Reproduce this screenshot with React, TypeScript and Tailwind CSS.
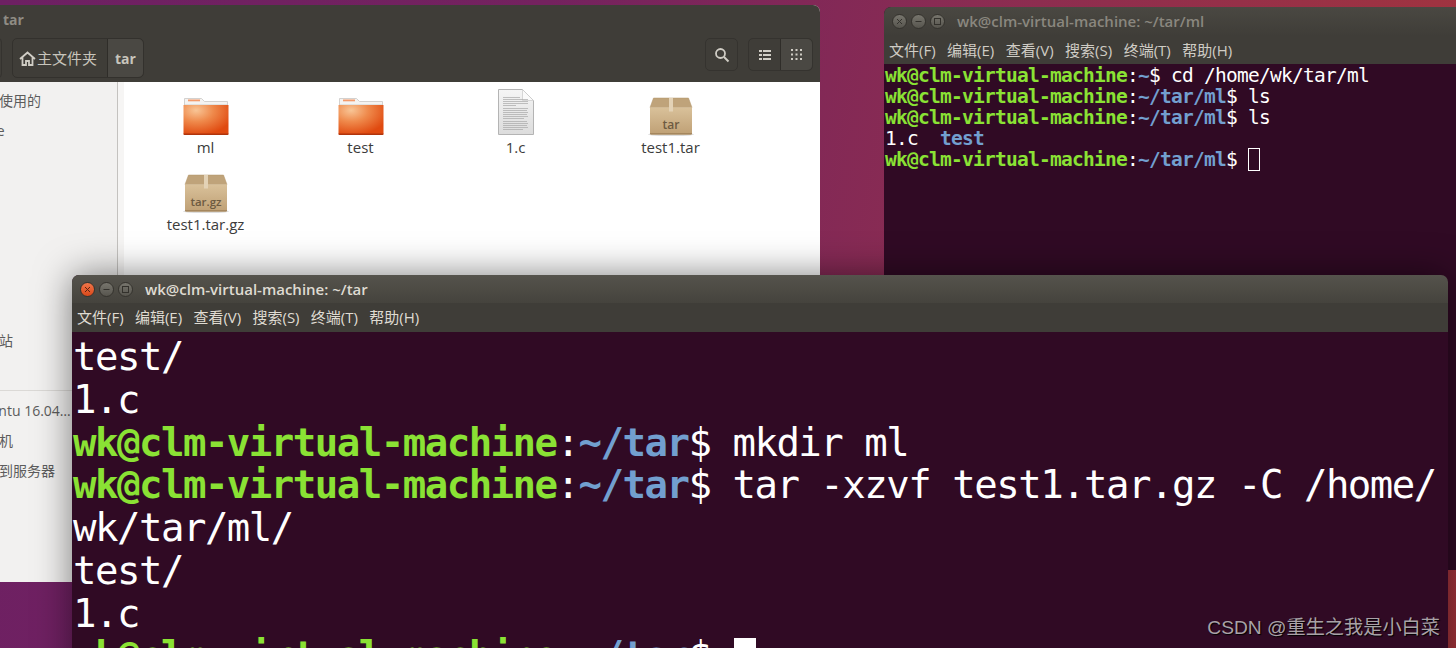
import React from "react";

const ui = "font-['Open_Sans','Noto_Sans_CJK_SC',sans-serif]";

function Folder() {
  return (
    <svg width="48" height="48" viewBox="0 0 48 48">
      <defs>
        <radialGradient id="fg" cx="28%" cy="18%" r="85%">
          <stop offset="0" stopColor="#f8c596" />
          <stop offset="0.45" stopColor="#ef8a4c" />
          <stop offset="1" stopColor="#e04a10" />
        </radialGradient>
      </defs>
      <path d="M2.5 17V10.5h17l3 3h23V17z" fill="#f4f3f1" stroke="#c9c7c4" strokeWidth="0.8" />
      <rect x="6" y="11.5" width="12" height="1.8" fill="#f39a6b" />
      <path d="M1.5 17h45v28.5q0 1-1 1h-43q-1 0-1-1z" fill="url(#fg)" />
      <path d="M1.5 45.5h45v.8q0 .7-1 .7h-43q-1 0-1-.7z" fill="#b0340c" />
    </svg>
  );
}

function Box({ label, size }: { label: string; size: number }) {
  return (
    <svg width="48" height="48" viewBox="0 0 48 48">
      <defs>
        <linearGradient id={"bx" + label} x1="0" y1="0" x2="0" y2="1">
          <stop offset="0" stopColor="#d9c19a" />
          <stop offset="1" stopColor="#bfa075" />
        </linearGradient>
      </defs>
      <ellipse cx="24" cy="46.5" rx="23" ry="1.6" fill="#00000022" />
      <path d="M6.5 10h35L45 19.500H3z" fill="#bfa37a" stroke="#b29468" strokeWidth="0.5" />
      <path d="M3 19.500H45v25.500q0 1.500-1.500 1.500H4.500q-1.500 0-1.500-1.500z" fill={"url(#bx" + label + ")"} />
      <path d="M3 45h42v.8q0 .7-1 .7H4q-1 0-1-.7z" fill="#a5875e" />
      <rect x="22" y="10" width="4" height="13.500" fill="#e3d2b6" />
      <text x="24" y="41" textAnchor="middle" fontSize={size} fontFamily="'Open Sans',sans-serif" fill="#6d5a41" fontWeight="600">
        {label}
      </text>
    </svg>
  );
}

function Doc() {
  const rows: [number, number][] = [
    [0, 17], [2, 25], [4, 25], [6, 25], [8, 13],
    [11, 25], [13, 24], [15, 25], [17, 24], [19, 25], [21, 21],
    [24, 24], [26, 25], [28, 24], [30, 25], [32, 20],
  ];
  return (
    <svg width="48" height="48" viewBox="0 0 48 48">
      <defs>
        <linearGradient id="dg" x1="0" y1="0" x2="0" y2="1">
          <stop offset="0" stopColor="#f5f5f5" />
          <stop offset="1" stopColor="#dcdcdc" />
        </linearGradient>
      </defs>
      <path d="M6.500 1.500h24l11 11v34h-35z" fill="url(#dg)" stroke="#b4b4b4" strokeWidth="1" />
      <path d="M30.500 1.500v11h11z" fill="#fafafa" stroke="#c8c8c8" strokeWidth="0.7" />
      {rows.map(([y, w], i) => (
        <rect key={i} x="11" y={9 + y} width={w} height="0.7" fill="#a8a8a8" />
      ))}
    </svg>
  );
}

function FileItem({ icon, name }: { icon: React.ReactNode; name: string }) {
  return (
    <div className="flex flex-col items-center">
      <div className="h-12 w-12">{icon}</div>
      <div className="mt-[1px] h-5 text-[15px] leading-5 text-[#3c3c3c]">{name}</div>
    </div>
  );
}

function Menu({ small }: { small?: boolean }) {
  const items = ["文件(F)", "编辑(E)", "查看(V)", "搜索(S)", "终端(T)", "帮助(H)"];
  return (
    <div className={small ? "flex h-[28px] items-center gap-[11.500px] pl-[5px] pt-[1px] text-[15px] text-[#cfccc5]" : "flex h-[29px] items-center gap-[11.300px] pl-[5px] text-[15px] text-[#dfdbd2]"}>
      {items.map((m) => (
        <span key={m}>{m}</span>
      ))}
    </div>
  );
}

function Lights({ active }: { active?: boolean }) {
  const bg = "flex h-[15px] w-[15px] items-center justify-center rounded-full border border-[#35332e] bg-[linear-gradient(#77756d,#57554e)]";
  return (
    <div className="flex items-center gap-[4px]">
      <div className={active ? "flex h-[15px] w-[15px] items-center justify-center rounded-full border border-[#35332e] bg-[linear-gradient(#f0764a,#d9481a)]" : bg}>
        <svg width="7" height="7" viewBox="0 0 7 7"><path d="M1 1l5 5M6 1L1 6" stroke={active ? "#5a2310" : "#33312c"} strokeWidth="1" /></svg>
      </div>
      <div className={bg}>
        <svg width="7" height="7" viewBox="0 0 7 7"><path d="M0.500 3.500h6" stroke="#33312c" strokeWidth="1" /></svg>
      </div>
      <div className={bg}>
        <svg width="7" height="7" viewBox="0 0 7 7"><rect x="0.500" y="0.500" width="6" height="6" fill="none" stroke="#33312c" strokeWidth="1" /></svg>
      </div>
    </div>
  );
}

const G = ({ children }: { children: React.ReactNode }) => <span className="font-bold text-[#8ae234]">{children}</span>;
const B = ({ children }: { children: React.ReactNode }) => <span className="font-bold text-[#729fcf]">{children}</span>;

function SmallLine({ path, cmd, cursor }: { path: string; cmd?: string; cursor?: boolean }) {
  return (
    <div className="relative h-[21px]">
      <G>wk@clm-virtual-machine</G>:<B>{path}</B>${cmd ? " " + cmd : " "}
      {cursor && <span className="absolute left-[363px] top-[-1px] h-[23px] w-[12px] border border-white" />}
    </div>
  );
}

function BigLine({ path, children }: { path: string; children?: React.ReactNode }) {
  return (
    <div className="relative h-[42.75px] whitespace-pre">
      <G>wk@clm-virtual-machine</G>:<B>{path}</B>$ {children}
    </div>
  );
}

export default function App() {
  return (
    <div className={"relative h-[648px] w-[1456px] overflow-hidden bg-[linear-gradient(100deg,#6d2063_0%,#74225f_35%,#8a2c52_62%,#a5353c_100%)] " + ui}>
      {/* File manager */}
      <div className="absolute left-[-60px] top-[5px] flex h-[577px] w-[880px] flex-col overflow-hidden rounded-t-[7px] bg-[#f2f1f0]">
        <div className="h-[77px] shrink-0 bg-[#3f3d38]">
          <div className="h-[30px] pl-[63px] pt-[5px] text-[14px] font-bold leading-5 text-[#8f8c84]">tar</div>
          <div className="flex h-[40px] items-start pr-[7px] pt-[3px]">
            <div className="h-[40px] w-[62px] rounded-r-[4px] border border-[#35332f]" />
            <div className="ml-[10px] flex h-[40px] w-[132px] rounded-[5px] border border-[#33312d]">
              <div className="flex w-[94px] items-center whitespace-nowrap pl-[6px] text-[15px] text-[#c8c5bc]">
                <svg width="17" height="15" viewBox="0 0 17 15" className="mr-[1px] shrink-0">
                  <path d="M1 8l7.500-6.500L16 8M3.500 6.500V14h3.500v-4h3v4h3.500V6.500" fill="none" stroke="#d0cdc5" strokeWidth="1.800" />
                </svg>
                主文件夹
              </div>
              <div className="flex flex-1 items-center justify-center rounded-r-[5px] border-l border-[#2f2d29] bg-[#4a4843] text-[14px] font-bold text-[#c8c5bc]">tar</div>
            </div>
            <div className="ml-auto flex h-[33px] w-[33px] items-center justify-center rounded-[5px] border border-[#35332f]">
              <svg width="16" height="16" viewBox="0 0 16 16"><circle cx="6.500" cy="6.500" r="4.500" fill="none" stroke="#d0cdc5" strokeWidth="1.800" /><path d="M10 10l4.500 4.500" stroke="#d0cdc5" strokeWidth="2" /></svg>
            </div>
            <div className="ml-[10px] flex h-[33px] w-[65px] rounded-[5px] border border-[#35332f]">
              <div className="flex flex-1 items-center justify-center">
                <svg width="12" height="10" viewBox="0 0 12 10" fill="#d0cdc5"><path d="M0 0h3v2H0zM4 0h8v2H4zM0 4h3v2H0zM4 4h8v2H4zM0 8h3v2H0zM4 8h8v2H4z" /></svg>
              </div>
              <div className="flex w-[32px] items-center justify-center rounded-r-[5px] border-l border-[#2f2d29] bg-[#4a4843]">
                <svg width="11" height="11" viewBox="0 0 11 11" fill="#d0cdc5"><path d="M0 0h2v2H0zM4.500 0h2v2h-2zM9 0h2v2H9zM0 4.500h2v2H0zM4.500 4.500h2v2h-2zM9 4.500h2v2H9zM0 9h2v2H0zM4.500 9h2v2h-2zM9 9h2v2H9z" /></svg>
              </div>
            </div>
          </div>
        </div>
        <div className="flex min-h-0 flex-1">
          <div className="w-[178px] shrink-0 border-r border-[#c4c2bf] pl-[31px] pt-[4px] text-[14px] leading-[30px] text-[#5c5c5c]">
            <div className="h-[30px]">最近使用的</div>
            <div className="-ml-[6px] h-[30px]">Home</div>
            <div className="mt-[180px] h-[30px]">回收站</div>
            <div className="-ml-[31px] mt-[34px] border-t border-[#dbd9d6]" />
            <div className="mt-[5px] h-[30px] whitespace-nowrap">Ubuntu 16.04…</div>
            <div className="h-[30px]">计算机</div>
            <div className="h-[30px]">连接到服务器</div>
          </div>
          <div className="w-[6px] shrink-0 bg-[#f6f5f4]" />
          <div className="flex-1 bg-white pl-[4px] pt-[6px]">
            <div className="grid grid-cols-[155px_155px_155px_155px] gap-y-[8px]">
              <FileItem icon={<Folder />} name="ml" />
              <FileItem icon={<Folder />} name="test" />
              <FileItem icon={<Doc />} name="1.c" />
              <FileItem icon={<Box label="tar" size={12} />} name="test1.tar" />
              <FileItem icon={<Box label="tar.gz" size={11.500} />} name="test1.tar.gz" />
            </div>
          </div>
        </div>
      </div>

      {/* Small terminal */}
      <div className="absolute left-[884px] top-[7px] h-[563px] w-[600px] overflow-hidden rounded-t-[7px] bg-[#300a24]">
        <div className="flex h-[29px] items-center bg-[linear-gradient(#4a4842,#3f3d38)] pl-[8px]">
          <Lights />
          <div className="ml-[12px] text-[15px] font-semibold text-[#8a877f]">wk@clm-virtual-machine: ~/tar/ml</div>
        </div>
        <div className="bg-[#3f3d38]"><Menu small /></div>
        <div className="pl-[1px] pt-[1px] font-['DejaVu_Sans_Mono',monospace] text-[19.500px] leading-[21px] tracking-[-0.740px] whitespace-pre text-white">
          <SmallLine path="~" cmd="cd /home/wk/tar/ml" />
          <SmallLine path="~/tar/ml" cmd="ls" />
          <SmallLine path="~/tar/ml" cmd="ls" />
          <div className="h-[21px]">1.c  <B>test</B></div>
          <SmallLine path="~/tar/ml" cursor />
        </div>
      </div>

      {/* Large terminal */}
      <div className="absolute left-[72px] top-[275px] h-[420px] w-[1376px] overflow-hidden rounded-t-[7px] bg-[#300a24] shadow-[0_0_36px_rgba(0,0,0,0.5)]">
        <div className="flex h-[28px] items-center bg-[linear-gradient(#55534c,#45433d)] pl-[8px]">
          <Lights active />
          <div className="ml-[12px] text-[15px] font-semibold text-[#dfdbd2]">wk@clm-virtual-machine: ~/tar</div>
        </div>
        <div className="bg-[#3f3d38]"><Menu /></div>
        <div className="pl-[1px] pt-[4px] font-['DejaVu_Sans_Mono',monospace] text-[39px] leading-[42.750px] tracking-[-1.500px] whitespace-pre text-white">
          <div className="h-[42.750px]">test/</div>
          <div className="h-[42.750px]">1.c</div>
          <BigLine path="~/tar">mkdir ml</BigLine>
          <BigLine path="~/tar">tar -xzvf test1.tar.gz -C /home/</BigLine>
          <div className="h-[42.750px]">wk/tar/ml/</div>
          <div className="h-[42.750px]">test/</div>
          <div className="h-[42.750px]">1.c</div>
          <BigLine path="~/tar"><span className="absolute left-[661px] top-[3px] h-[44px] w-[22px] bg-white" /></BigLine>
        </div>
      </div>

      <div className="absolute bottom-[8px] right-[16px] font-['Liberation_Sans','Noto_Sans_CJK_SC',sans-serif] text-[19.200px] leading-6 text-[#a9a2a7] [text-shadow:1px_1px_1px_#000]">CSDN @重生之我是小白菜</div>
    </div>
  );
}
